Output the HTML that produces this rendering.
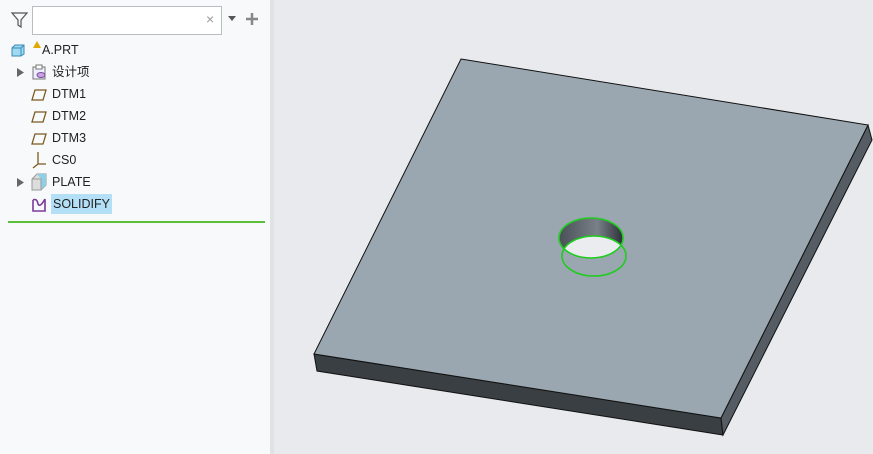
<!DOCTYPE html>
<html><head><meta charset="utf-8"><style>
html,body{margin:0;padding:0;width:873px;height:454px;overflow:hidden;background:#e9eaee;font-family:"Liberation Sans","Noto Sans CJK SC",sans-serif;}
#panel{position:absolute;left:0;top:0;width:270px;height:454px;background:#f8f9fa;border-right:4px solid #dfe3e4;}
.row{position:absolute;left:0;height:20px;font-size:12.5px;color:#222;line-height:20px;}
.ic{position:absolute;}
</style></head><body>
<div id="panel">
  <svg class="ic" style="left:10px;top:10px" width="20" height="20"><path d="M2 3 H17 L11 10 V17 L8 15 V10 Z" fill="none" stroke="#555" stroke-width="1.2"/></svg>
  <div style="position:absolute;left:32px;top:6px;width:188px;height:27px;background:#fff;border:1px solid #b8bfc3;"></div>
  <div style="position:absolute;left:206px;top:11px;font-size:14px;color:#999">×</div>
  <svg class="ic" style="left:228px;top:16px" width="8" height="6"><path d="M0 0 H8 L4 5Z" fill="#555"/></svg>
  <svg class="ic" style="left:246px;top:13px" width="12" height="12"><path d="M6 0 V12 M0 6 H12" stroke="#888" stroke-width="2.5"/></svg>
  <svg class="ic" style="left:11px;top:43px" width="14" height="14"><path d="M1 5 L4 2 H13 V11 L10 13 H1Z" fill="#9fdaf2" stroke="#3a8bb5"/><path d="M1 5 H10 V13 M10 5 L13 2" fill="none" stroke="#3a8bb5"/></svg>
  <svg class="ic" style="left:33px;top:41px" width="8" height="7"><path d="M4 0 L8 7 H0Z" fill="#e0a800"/></svg>
  <div class="row" style="left:42px;top:40px">A.PRT</div>
  <svg class="ic" style="left:17px;top:68px" width="7" height="9"><path d="M0 0 L7 4.5 L0 9Z" fill="#666"/></svg>
  <svg class="ic" style="left:32px;top:64px" width="15" height="16"><rect x="1" y="3" width="12" height="12" fill="#eef" stroke="#777"/><rect x="4" y="1" width="6" height="4" fill="#fff" stroke="#777"/><ellipse cx="9" cy="11" rx="4" ry="2.5" fill="#c9a3e0" stroke="#7a4aa0"/></svg>
  <div class="row" style="left:52px;top:62px">设计项</div>
  <svg class="ic" style="left:31px;top:89px" width="16" height="12"><path d="M4 1 H15 L12 11 H1Z" fill="none" stroke="#7a5a20" stroke-width="1.3"/></svg>
  <div class="row" style="left:52px;top:84px">DTM1</div>
  <svg class="ic" style="left:31px;top:111px" width="16" height="12"><path d="M4 1 H15 L12 11 H1Z" fill="none" stroke="#7a5a20" stroke-width="1.3"/></svg>
  <div class="row" style="left:52px;top:106px">DTM2</div>
  <svg class="ic" style="left:31px;top:133px" width="16" height="12"><path d="M4 1 H15 L12 11 H1Z" fill="none" stroke="#7a5a20" stroke-width="1.3"/></svg>
  <div class="row" style="left:52px;top:128px">DTM3</div>
  <svg class="ic" style="left:31px;top:151px" width="16" height="18"><path d="M7 1 V13 H15 M7 13 L2 17" fill="none" stroke="#7a5a20" stroke-width="1.3"/></svg>
  <div class="row" style="left:52px;top:150px">CS0</div>
  <svg class="ic" style="left:17px;top:178px" width="7" height="9"><path d="M0 0 L7 4.5 L0 9Z" fill="#666"/></svg>
  <svg class="ic" style="left:31px;top:173px" width="16" height="18"><path d="M1 6 L6 1 H15 V12 L10 17 H1Z" fill="#ddd" stroke="#999"/><path d="M6 1 H15 V12 L10 17 V6 Z" fill="#8fcfe6"/><path d="M1 6 H10 V17" fill="none" stroke="#999"/></svg>
  <div class="row" style="left:52px;top:172px">PLATE</div>
  <svg class="ic" style="left:31px;top:196px" width="16" height="16"><path d="M2 4 V15 H14 V3 M2 4 Q6 2 7 8 Q9 12 14 3" fill="none" stroke="#7a3a9a" stroke-width="1.6"/></svg>
  <div class="row" style="left:51px;top:194px;background:#b3e0f7;padding:0 2px">SOLIDIFY</div>
  <div style="position:absolute;left:8px;top:221px;width:257px;height:2px;background:#5cbf3a"></div>
</div>
<svg style="position:absolute;left:0;top:0" width="873" height="454">
  <path d="M314 354 L721 418 L723 435 L317 371Z" fill="#3a3f43" stroke="#111" stroke-width="1"/>
  <path d="M721 418 L868 125 L872 140 L723 435Z" fill="#555c63" stroke="#111" stroke-width="1"/>
  <path d="M461 59 L868 125 L721 418 L314 354Z" fill="#9aa7b0" stroke="#111" stroke-width="1"/>
  <defs>
    <clipPath id="c"><ellipse cx="591" cy="238" rx="32" ry="20"/></clipPath>
    <linearGradient id="g" x1="0" x2="1"><stop offset="0" stop-color="#4a5058"/><stop offset="0.6" stop-color="#7a8088"/><stop offset="1" stop-color="#2c3036"/></linearGradient>
  </defs>
  <ellipse cx="591" cy="238" rx="32" ry="20" fill="url(#g)"/>
  <ellipse cx="594" cy="256" rx="32" ry="20" fill="#ebecef" clip-path="url(#c)"/>
  <ellipse cx="591" cy="238" rx="32" ry="20" fill="none" stroke="#1fcc1f" stroke-width="1.6"/>
  <ellipse cx="594" cy="256" rx="32" ry="20" fill="none" stroke="#1fcc1f" stroke-width="1.6"/>
  <path d="M594 256 m0 0" />
</svg>
</body></html>
